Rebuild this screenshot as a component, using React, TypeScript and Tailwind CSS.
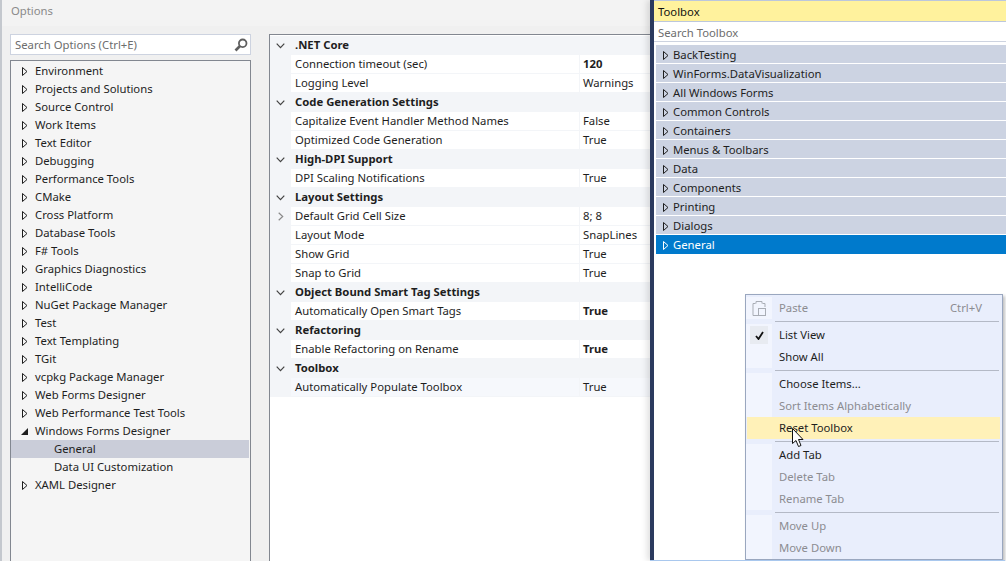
const treeItems = [
  "Environment", "Projects and Solutions", "Source Control", "Work Items", "Text Editor", "Debugging",
  "Performance Tools", "CMake", "Cross Platform", "Database Tools", "F# Tools", "Graphics Diagnostics",
  "IntelliCode", "NuGet Package Manager", "Test", "Text Templating", "TGit", "vcpkg Package Manager",
  "Web Forms Designer", "Web Performance Test Tools",
];

const grid = [
  { name: ".NET Core", rows: [["Connection timeout (sec)", "120", true], ["Logging Level", "Warnings"]] },
  { name: "Code Generation Settings", rows: [["Capitalize Event Handler Method Names", "False"], ["Optimized Code Generation", "True"]] },
  { name: "High-DPI Support", rows: [["DPI Scaling Notifications", "True"]] },
  { name: "Layout Settings", rows: [["Default Grid Cell Size", "8; 8", false, true], ["Layout Mode", "SnapLines"], ["Show Grid", "True"], ["Snap to Grid", "True"]] },
  { name: "Object Bound Smart Tag Settings", rows: [["Automatically Open Smart Tags", "True", true]] },
  { name: "Refactoring", rows: [["Enable Refactoring on Rename", "True", true]] },
  { name: "Toolbox", rows: [["Automatically Populate Toolbox", "True"]] },
] as { name: string; rows: [string, string, boolean?, boolean?][] }[];

const toolboxTabs = [
  "BackTesting", "WinForms.DataVisualization", "All Windows Forms", "Common Controls", "Containers",
  "Menus & Toolbars", "Data", "Components", "Printing", "Dialogs",
];

const Arrow = ({ color = "#1e1e1e" }: { color?: string }) => (
  <svg width="6" height="9" viewBox="0 0 6 9" className="shrink-0">
    <path d="M0.5 0.5 L5 4.5 L0.5 8.5 Z" fill="none" stroke={color} strokeWidth="1" />
  </svg>
);

const MenuItem = ({ label, shortcut, disabled, active, checked, paste }: { label: string; shortcut?: string; disabled?: boolean; active?: boolean; checked?: boolean; paste?: boolean }) => (
  <div className={`flex h-[22px] items-center ${active ? "mr-[2px] ml-px bg-[#fff1b8]" : ""} ${disabled ? "text-[#8c8c91]" : "text-[#1e1e1e]"}`}>
    <div className={`flex h-[22px] shrink-0 items-center justify-center ${active ? "w-[25px]" : "w-[26px] bg-[#f2f5fe]"}`}>
      {checked && (
        <div className="flex h-[18px] w-[18px] items-center justify-center bg-[#e8ebf1]">
          <svg width="9" height="9" viewBox="0 0 9 9">
            <path d="M1 5 L3.5 8 L8 1" fill="none" stroke="#111" strokeWidth="1.8" />
          </svg>
        </div>
      )}
      {paste && (
        <svg width="14" height="17" viewBox="0 0 14 17">
          <path d="M3.5 3.5 H1 V15.5 H6 M10.5 3.5 H13 V7 M4 3.5 V1.5 H10 V3.5" fill="none" stroke="#a9adb5" />
          <rect x="6.5" y="8.5" width="7" height="7" fill="none" stroke="#a9adb5" />
        </svg>
      )}
    </div>
    <span className="flex-1 pl-[7px]">{label}</span>
    {shortcut && <span className="pr-[20px]">{shortcut}</span>}
  </div>
);

const Sep = () => (
  <div className="flex h-[5px] items-center pr-[3px] pl-[29px]">
    <div className="h-px w-full bg-[#b4b9c6]" />
  </div>
);

export default function App() {
  return (
    <div className="relative flex h-[561px] w-[1006px] overflow-hidden bg-white font-['Noto_Sans',sans-serif] text-[11.3px] text-[#1e1e1e]">
      {/* options dialog */}
      <div className="flex h-full w-[650px] shrink-0 flex-col border-l-2 border-[#c4c8ce] bg-[#f0f0f0]">
        <div className="flex h-[26px] shrink-0 items-center bg-[#f3f3f3] pb-[4px] pl-[9px] text-[#8a8a8a]">Options</div>
        <div className="flex min-h-0 flex-1 pt-2">
          <div className="flex w-[249px] shrink-0 flex-col pl-[8px]">
            <div className="flex h-[21px] shrink-0 items-center justify-between border border-[#cdd3e0] bg-white pt-[2px] pr-[2px] pl-[4px] text-[#6d6d6d]">
              <span>Search Options (Ctrl+E)</span>
              <svg width="14" height="14" viewBox="0 0 14 14" className="-mt-[2px]">
                <circle cx="8.7" cy="5.3" r="3.8" fill="none" stroke="#5f5f5f" strokeWidth="1.8" />
                <path d="M6 8 L1.5 12.5" stroke="#5f5f5f" strokeWidth="2.6" />
              </svg>
            </div>
            <div className="mt-[5px] min-h-0 flex-1 border border-b-0 border-[#828790] bg-[#f5f5f5] pt-px">
              {treeItems.map((t) => (
                <div key={t} className="flex h-[18px] items-center pl-[11px]">
                  <Arrow />
                  <span className="ml-[7px]">{t}</span>
                </div>
              ))}
              <div className="flex h-[18px] items-center pl-[10px]">
                <svg width="7" height="7" viewBox="0 0 7 7" className="shrink-0">
                  <path d="M7 0 V7 H0 Z" fill="#1e1e1e" />
                </svg>
                <span className="ml-[7px]">Windows Forms Designer</span>
              </div>
              <div className="mr-px flex h-[18px] items-center bg-[#cacdd9] pl-[43px]">General</div>
              <div className="flex h-[18px] items-center pl-[43px]">Data UI Customization</div>
              <div className="flex h-[18px] items-center pl-[11px]">
                <Arrow />
                <span className="ml-[7px]">XAML Designer</span>
              </div>
            </div>
          </div>
          <div className="ml-[18px] min-w-0 flex-1 border-t border-l border-[#828790] bg-white pt-px">
            {grid.map((g) => (
              <div key={g.name}>
                <div className="flex h-[19px] items-center bg-[#f3f5f8] font-bold">
                  <div className="flex w-[21px] justify-center">
                    <svg width="9" height="6" viewBox="0 0 9 6">
                      <path d="M0.7 0.7 L4.5 4.7 L8.3 0.7" fill="none" stroke="#444" strokeWidth="1.2" />
                    </svg>
                  </div>
                  <span className="pl-[4px]">{g.name}</span>
                </div>
                {g.rows.map(([k, v, bold, expand]) => (
                  <div key={k} className={`flex h-[19px] ${g.name === "Toolbox" ? "bg-[#f6f8fc]" : "bg-white"}`}>
                    <div className="flex w-[21px] items-center justify-center bg-[#f3f5f8]">
                      {expand && (
                        <svg width="6" height="9" viewBox="0 0 6 9">
                          <path d="M0.7 0.7 L4.7 4.5 L0.7 8.3" fill="none" stroke="#8a8a8a" strokeWidth="1.2" />
                        </svg>
                      )}
                    </div>
                    <div className="flex w-[288px] items-center border-b border-[#f3f5f8] pt-px pl-[4px]">{k}</div>
                    <div className={`flex flex-1 items-center border-b border-l border-[#f3f5f8] pt-px pl-[3px] ${bold ? "font-bold" : ""}`}>{v}</div>
                  </div>
                ))}
              </div>
            ))}
          </div>
        </div>
      </div>

      {/* toolbox */}
      <div className="relative z-10 flex h-full min-w-0 flex-1 flex-col border-l-4 border-[#2b3a5e] bg-white shadow-[-3px_0_6px_rgba(0,0,0,0.12)]">
        <div className="flex h-[22px] shrink-0 items-center border-t border-b border-[#bcc7dc] bg-[#fff29d] pt-[3px] pl-[4px] text-[#111]">Toolbox</div>
        <div className="flex h-[20px] shrink-0 items-center border-b border-[#cdd3e0] pt-[3px] pl-[4px] text-[#6d6d6d]">Search Toolbox</div>
        <div className="pt-[3px] pl-[2px]">
          {toolboxTabs.map((t) => (
            <div key={t} className="flex h-[19px] items-center border-b border-white bg-[#ccd3e2] pt-[3px] pl-[7px] text-[#1e1e1e]">
              <Arrow />
              <span className="ml-[4px]">{t}</span>
            </div>
          ))}
          <div className="flex h-[19px] items-center bg-[#007acc] pt-[2px] pl-[7px] text-white">
            <Arrow color="#ffffff" />
            <span className="ml-[4px]">General</span>
          </div>
        </div>
      </div>

      {/* context menu */}
      <div className="absolute top-[294px] left-[745px] z-20 w-[258px] border border-[#9aa7bf] bg-[#e9eefc] pt-[2px] shadow-[2px_2px_3px_rgba(0,0,0,0.25)]">
        <MenuItem label="Paste" shortcut="Ctrl+V" disabled paste />
        <Sep />
        <MenuItem label="List View" checked />
        <MenuItem label="Show All" />
        <Sep />
        <MenuItem label="Choose Items..." />
        <MenuItem label="Sort Items Alphabetically" disabled />
        <MenuItem label="Reset Toolbox" active />
        <Sep />
        <MenuItem label="Add Tab" />
        <MenuItem label="Delete Tab" disabled />
        <MenuItem label="Rename Tab" disabled />
        <Sep />
        <MenuItem label="Move Up" disabled />
        <MenuItem label="Move Down" disabled />
      </div>

      {/* light line along the bottom edge of the capture */}
      <div className="absolute bottom-0 left-[650px] z-20 h-px w-[355px] bg-[#a9c8ee]" />

      {/* mouse cursor */}
      <svg className="absolute top-[428px] left-[792px] z-30" width="14" height="20" viewBox="0 0 14 20">
        <path d="M0.5 0.5 V15.5 L4 12.5 L6.5 18.5 L9 17.5 L6.5 11.5 L11 11.5 Z" fill="#fff" stroke="#111" strokeWidth="1" />
      </svg>
    </div>
  );
}
